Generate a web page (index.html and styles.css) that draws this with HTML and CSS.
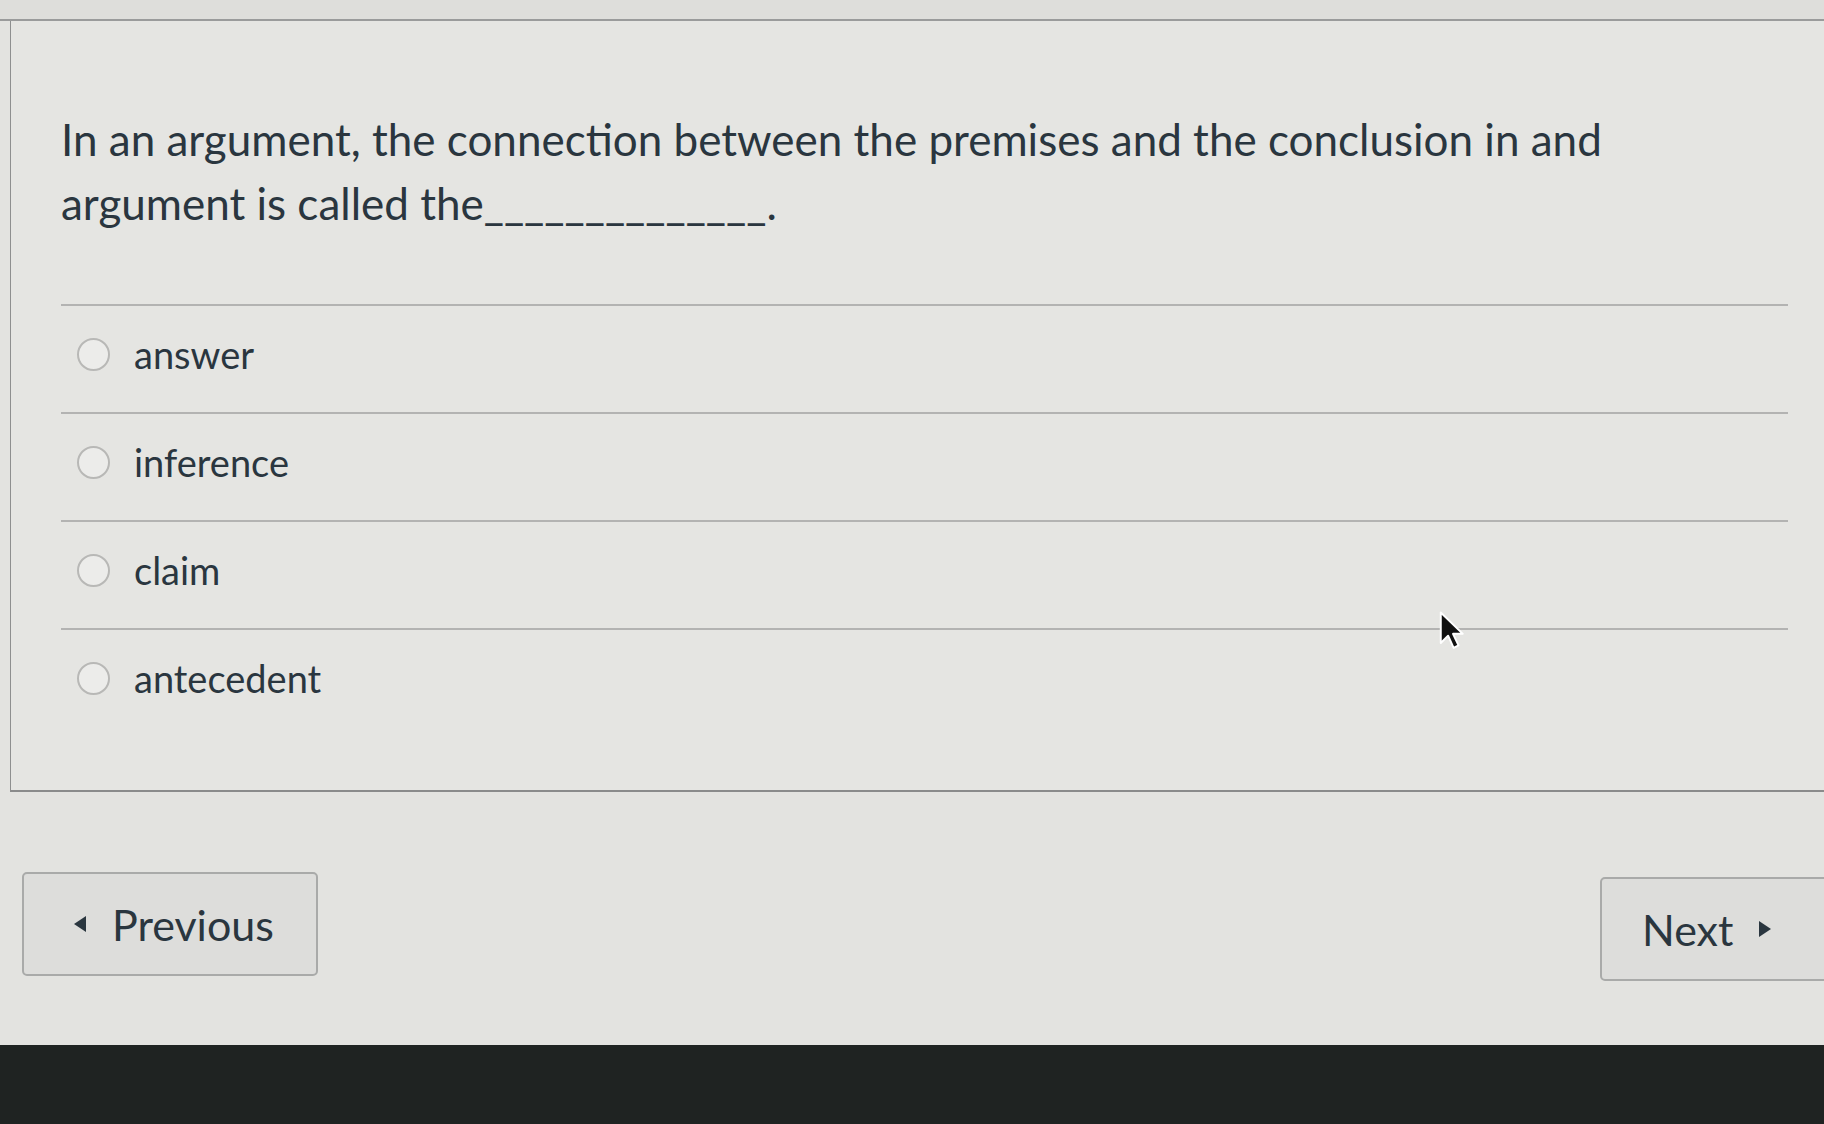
FILE: index.html
```html
<!DOCTYPE html>
<html lang="en">
<head>
<meta charset="utf-8">
<title>Quiz question</title>
<link rel="stylesheet" href="styles.css">
</head>
<body>
<div class="screen">
  <div class="topstrip"></div>
  <div class="card">
    <div class="question">In an argument, the connection between the premises and the conclusion in and argument is called the______________.</div>
    <div class="answers">
      <label class="answer"><span class="radio"></span><span class="label">answer</span></label>
      <label class="answer"><span class="radio"></span><span class="label">inference</span></label>
      <label class="answer"><span class="radio"></span><span class="label">claim</span></label>
      <label class="answer"><span class="radio"></span><span class="label">antecedent</span></label>
    </div>
  </div>
  <div class="nav">
    <button class="btn prev"><span class="tri tri-left"></span>Previous</button>
    <button class="btn next">Next<span class="tri tri-right"></span></button>
  </div>
  <svg class="cursor" width="30" height="44" viewBox="0 0 24 36"><path d="M2 2 L2 27 L8 21 L12.5 31 L16.5 29 L12 19.5 L20 19.5 Z" fill="#111" stroke="#fff" stroke-width="1.6" stroke-linejoin="round"/></svg>
</div>
<div class="bezel"></div>
</body>
</html>
```
FILE: styles.css
```css
html, body {
  margin: 0;
  padding: 0;
}
body {
  width: 1824px;
  height: 1124px;
  overflow: hidden;
  background: #1f2322;
  font-family: Lato, "Open Sans", sans-serif;
  color: #2d3b45;
}
.screen {
  position: relative;
  height: 1045px;
  background: #e3e3e0;
  display: flex;
  flex-direction: column;
}
.topstrip {
  height: 19px;
  background: #dededb;
  border-bottom: 2px solid #9a9b9b;
}
.card {
  margin-left: 10px;
  border-left: 1px solid #8e8f8f;
  border-bottom: 2px solid #8a8b8b;
  padding: 86px 36px 54px 50px;
  background: #e5e5e2;
}
.question {
  font-size: 44px;
  line-height: 64px;
  color: #2a363f;
  margin-bottom: 69px;
  max-width: 1620px;
}
.answers {
  display: flex;
  flex-direction: column;
}
.answer {
  display: flex;
  align-items: center;
  height: 108px;
  border-top: 2px solid #b3b3b2;
  padding-left: 16px;
  padding-bottom: 10px;
  box-sizing: border-box;
}
.radio {
  width: 33px;
  height: 33px;
  border-radius: 50%;
  border: 2px solid #b8b8b6;
  background: #ececea;
  box-sizing: border-box;
  margin-right: 24px;
  flex: none;
}
.label {
  font-size: 38px;
  color: #2a363f;
}
.nav {
  display: flex;
  justify-content: space-between;
  align-items: flex-start;
  padding-top: 80px;
}
.btn {
  font-family: Lato, "Open Sans", sans-serif;
  font-size: 43px;
  color: #2a363f;
  background: #dddddb;
  border: 2px solid #a9aaa9;
  border-radius: 5px;
  display: flex;
  align-items: center;
  height: 104px;
  box-sizing: border-box;
}
.prev {
  margin-left: 22px;
  width: 296px;
  padding: 0 0 0 50px;
}
.next {
  margin-top: 5px;
  width: 230px;
  margin-right: -6px;
  padding: 0 0 0 40px;
}
.tri {
  width: 0;
  height: 0;
  border-top: 8px solid transparent;
  border-bottom: 8px solid transparent;
  display: inline-block;
}
.tri-left {
  border-right: 12px solid #2a363f;
  margin-right: 26px;
}
.tri-right {
  border-left: 12px solid #2a363f;
  margin-left: 26px;
}
.cursor {
  position: absolute;
  left: 1438px;
  top: 610px;
}
.bezel {
  height: 79px;
  background: #1f2322;
}
```
